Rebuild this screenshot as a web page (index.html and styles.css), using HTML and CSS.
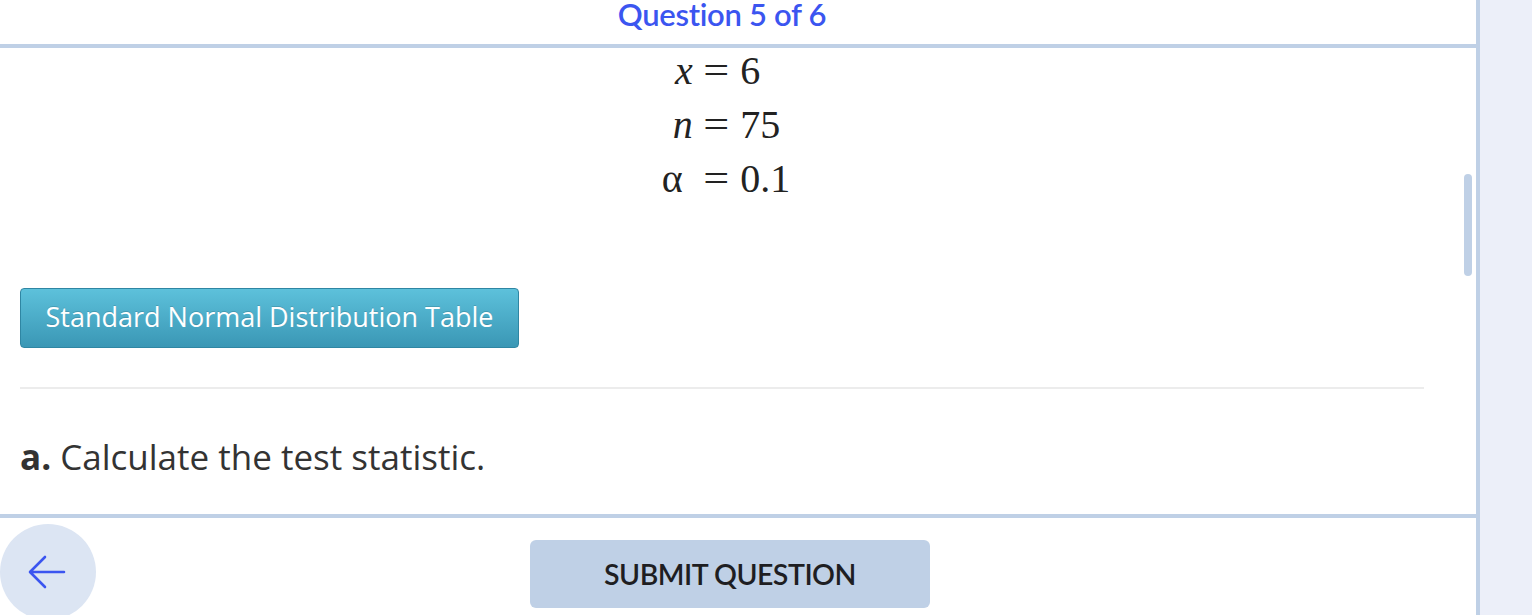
FILE: index.html
```html
<!DOCTYPE html>
<html>
<head>
<meta charset="utf-8">
<link rel="stylesheet" href="styles.css">
</head>
<body>
<div class="page">
  <div class="main">
    <div class="header">Question 5 of 6</div>
    <div class="content">
      <div class="math">
        <div class="row"><span class="var"><i>x</i></span><span class="eq">=</span><span class="val">6</span></div>
        <div class="row"><span class="var"><i>n</i></span><span class="eq">=</span><span class="val">75</span></div>
        <div class="row"><span class="var">α&nbsp;</span><span class="eq">=</span><span class="val">0.1</span></div>
      </div>
      <button class="table-btn">Standard Normal Distribution Table</button>
      <div class="divider"></div>
      <p class="question"><b>a.</b> Calculate the test statistic.</p>
      <div class="thumb"></div>
    </div>
    <div class="footer">
      <div class="back">
        <svg width="40" height="36" viewBox="0 0 40 36"><path d="M37 18H4M18 3L3 18l15 15" fill="none" stroke="#3b55f0" stroke-width="2.6" stroke-linecap="round" stroke-linejoin="round"/></svg>
      </div>
      <button class="submit">SUBMIT QUESTION</button>
    </div>
  </div>
  <div class="side"></div>
</div>
</body>
</html>
```

FILE: styles.css
```css
html, body {
  margin: 0;
  padding: 0;
  background: #fff;
  height: 615px;
  overflow: hidden;
}
.page {
  display: flex;
  height: 615px;
}
.main {
  width: 1476px;
  border-right: 4px solid #bfd0e6;
  display: flex;
  flex-direction: column;
}
.side {
  flex: 1;
  background: #eceff9;
}
.header {
  height: 44px;
  border-bottom: 4px solid #bfd0e6;
  padding-right: 32px;
  text-align: center;
  font-family: Lato, "Liberation Sans", sans-serif;
  font-weight: 600;
  font-size: 31px;
  line-height: 28px;
  color: #3b55f0;
  letter-spacing: -0.3px;
}
.content {
  position: relative;
  height: 466px;
  border-bottom: 4px solid #bfd0e6;
  padding: 0 52px 0 20px;
}
.math {
  display: grid;
  grid-template-columns: auto auto auto;
  justify-content: center;
  font-family: "Liberation Serif", "DejaVu Serif", serif;
  font-size: 40px;
  line-height: 54px;
  color: #222;
  margin-top: -4px;
  padding-left: 8px;
}
.row { display: contents; }
.var { text-align: right; }
.eq { padding: 0 13px 0 12px; transform: scaleX(1.15); }
.val { text-align: left; }
.table-btn {
  display: block;
  margin-top: 82px;
  width: 499px;
  height: 60px;
  border: 1px solid #2f86a3;
  border-radius: 4px;
  background: linear-gradient(#5dc1db, #3a97b5);
  color: #fff;
  font-family: "Open Sans", "Noto Sans", sans-serif;
  font-weight: 500;
  font-size: 27px;
  line-height: 56px;
  padding: 0 0 2px 0;
  text-shadow: 0 -1px 0 rgba(0,0,0,0.15);
}
.divider {
  margin-top: 39px;
  height: 2px;
  background: #ececec;
}
.question {
  margin: 46px 0 0 0;
  font-family: "Open Sans", "Noto Sans", sans-serif;
  font-size: 35px;
  line-height: 44px;
  color: #333;
}
.thumb {
  position: absolute;
  right: 4px;
  top: 126px;
  width: 8px;
  height: 102px;
  border-radius: 4px;
  background: #bfd0e6;
}
.footer {
  flex: 1;
  position: relative;
  display: flex;
  justify-content: center;
  padding-top: 22px;
  padding-right: 16px;
  overflow: hidden;
}
.back {
  position: absolute;
  left: 0;
  top: 6px;
  width: 96px;
  height: 96px;
  border-radius: 50%;
  background: #dce5f3;
  display: flex;
  align-items: center;
  justify-content: center;
}
.back svg { margin-right: 2px; }
.submit {
  width: 400px;
  height: 68px;
  border: none;
  border-radius: 6px;
  background: #bfd0e6;
  font-family: Lato, "Liberation Sans", sans-serif;
  font-weight: 600;
  font-size: 28.5px;
  color: #1e1e22;
  letter-spacing: -0.5px;
  padding: 0;
}
```
